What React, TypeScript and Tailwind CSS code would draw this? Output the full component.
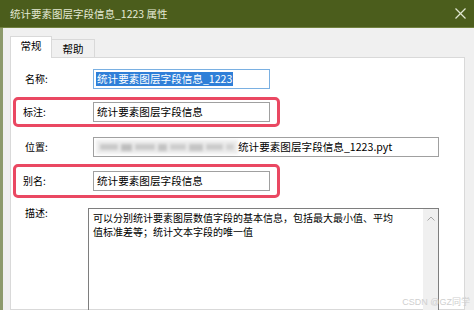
import React from 'react'

const Label = ({ text, className }: { text: string; className: string }) => (
    <span className={`shrink-0 leading-[14px] ${className}`}>{text}</span>
)

const App = () => {
    return (
        <div className="relative w-[474px] h-[310px] overflow-hidden bg-[#f0f0f0] flex flex-col font-['Noto_Sans_CJK_SC','Microsoft_YaHei',sans-serif] text-[10px] text-black">
            {/* title bar */}
            <div className="h-[28px] shrink-0 bg-[#4b5d1c] border-b border-[#71813f] flex items-center justify-between pl-[10px] pr-[8px] text-[#e3e9d4] text-[10.5px]">
                <span>统计要素图层字段信息_1223 属性</span>
                <svg width="11" height="11" viewBox="0 0 11 11" className="stroke-[#dfe6cf]" strokeWidth="1.3">
                    <line x1="0.5" y1="0.5" x2="10.5" y2="10.5" />
                    <line x1="10.5" y1="0.5" x2="0.5" y2="10.5" />
                </svg>
            </div>

            <div className="flex-1 flex flex-col border-l-[3px] border-[#8d9a6c] pl-[7px] pr-[9px] pt-[8px]">
                {/* tabs */}
                <div className="flex items-end h-[22px] shrink-0 relative z-10 -mb-px">
                    <div className="h-[22px] w-[42px] bg-white border border-b-0 border-[#d9d9d9] flex items-center justify-center leading-none pb-[2px] text-[10.5px]">
                        常规
                    </div>
                    <div className="h-[19px] w-[43px] bg-[#f0f0f0] border border-l-0 border-[#d9d9d9] flex items-center justify-center leading-none pt-[1px] text-[10.5px]">
                        帮助
                    </div>
                </div>

                {/* panel */}
                <div className="flex-1 bg-white border border-[#d9d9d9] flex flex-col pt-[11px]">
                    {/* 名称 */}
                    <div className="flex items-center h-[20px]">
                        <Label text="名称:" className="ml-[14px] w-[68px]" />
                        <div className="w-[177px] h-[20px] border border-[#7ab0e2] flex items-center pl-[2px] text-[10.6px] overflow-hidden">
                            <span className="bg-[#2f7fd8] text-white leading-[14px] px-px whitespace-nowrap">统计要素图层字段信息_1223</span>
                        </div>
                    </div>

                    {/* 标注 */}
                    <div className="ml-[2px] mt-[8px] w-[267px] h-[30px] border-[3px] border-[#ea4862] rounded-[5px] flex items-center">
                        <Label text="标注:" className="ml-[7px] w-[70px]" />
                        <div className="w-[177px] h-[20px] border border-[#a0a0a0] flex items-center pl-[3px] leading-[14px] text-[10.6px]">
                            统计要素图层字段信息
                        </div>
                    </div>

                    {/* 位置 */}
                    <div className="flex items-center h-[20px] mt-[10px]">
                        <Label text="位置:" className="ml-[14px] w-[68px]" />
                        <div className="w-[346px] h-[20px] border border-[#a0a0a0] flex items-center pl-[2px] leading-[14px] overflow-hidden text-[10.6px]">
                            <div className="w-[142px] h-[14px] shrink-0 flex items-center gap-[3px] bg-[#ededed] blur-[1.5px] px-[4px]">
                                <div className="w-[18px] h-[6px] bg-[#c9c9c9]" />
                                <div className="w-[12px] h-[7px] bg-[#bdbdbd]" />
                                <div className="w-[20px] h-[6px] bg-[#cacaca]" />
                                <div className="w-[10px] h-[7px] bg-[#c2c2c2]" />
                                <div className="w-[16px] h-[6px] bg-[#cdcdcd]" />
                                <div className="w-[14px] h-[7px] bg-[#c4c4c4]" />
                                <div className="w-[18px] h-[6px] bg-[#cbcbcb]" />
                                <div className="w-[8px] h-[6px] bg-[#d2d2d2]" />
                            </div>
                            <span className="whitespace-nowrap">统计要素图层字段信息_1223.pyt</span>
                        </div>
                    </div>

                    {/* 别名 */}
                    <div className="ml-[2px] mt-[7px] w-[267px] h-[34px] border-[3px] border-[#ea4862] rounded-[5px] flex items-center">
                        <Label text="别名:" className="ml-[7px] w-[70px]" />
                        <div className="w-[177px] h-[20px] border border-[#a0a0a0] flex items-center pl-[3px] leading-[14px] text-[10.6px]">
                            统计要素图层字段信息
                        </div>
                    </div>

                    {/* 描述 */}
                    <div className="flex flex-1 items-start mt-[10px]">
                        <Label text="描述:" className="ml-[14px] w-[63px] -mt-[2px]" />
                        <div className="w-[351px] self-stretch border border-b-0 border-[#7e7e7e] flex -mb-px">
                            <div className="flex-1 min-w-0 pl-[4px] pt-[2px] leading-[14px] whitespace-nowrap">
                                <div>可以分别统计要素图层数值字段的基本信息，包括最大最小值、平均</div>
                                <div>值标准差等；统计文本字段的唯一值</div>
                            </div>
                            <div className="w-[15px] shrink-0 bg-[#f0f0f0] flex justify-center pt-[7px]">
                                <svg width="8" height="5" viewBox="0 0 8 5" fill="none" className="stroke-[#a6a6a6]" strokeWidth="1">
                                    <polyline points="0.5,4.5 4,1 7.5,4.5" />
                                </svg>
                            </div>
                        </div>
                    </div>
                </div>
            </div>

            <span className="absolute right-[4px] bottom-[3px] text-[9px] leading-none text-[#cfcfcf] font-['Liberation_Sans','Noto_Sans_CJK_SC',sans-serif]">
                CSDN @GZ同学
            </span>
        </div>
    )
}

export default App
